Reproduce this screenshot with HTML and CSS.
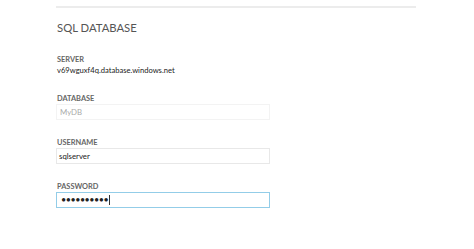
FILE: index.html
```html
<!DOCTYPE html>
<html lang="en">
<head>
    <meta charset="UTF-8">
    <title>SQL Database</title>
    <link rel="stylesheet" href="styles.css">
</head>
<body>
    <div class="panel">
        <h2 class="title">SQL DATABASE</h2>
        <div class="form">
            <div class="field">
                <div class="label">SERVER</div>
                <div class="value">v69wguxf4q.database.windows.net</div>
            </div>
            <div class="field">
                <div class="label">DATABASE</div>
                <div class="box disabled">MyDB</div>
            </div>
            <div class="field">
                <div class="label">USERNAME</div>
                <div class="box">sqlserver</div>
            </div>
            <div class="field">
                <div class="label">PASSWORD</div>
                <div class="box focused"><span class="dots">••••••••••</span><span class="caret"></span></div>
            </div>
        </div>
    </div>
</body>
</html>
```

FILE: styles.css
```css
body {
    margin: 0;
    background: #fff;
    font-family: Lato, "Noto Sans", sans-serif;
}
.panel {
    margin: 6px 0 0 56px;
    width: 360px;
    border-top: 2px solid #ececec;
}
.title {
    margin: 12px 0 0 1px;
    font-size: 11.3px;
    line-height: 15px;
    font-weight: 400;
    color: #555;
}
.form {
    display: flex;
    flex-direction: column;
    gap: 18px;
    margin-top: 20px;
}
.field {
    display: flex;
    flex-direction: column;
}
.label {
    margin-left: 1px;
    font-size: 7.4px;
    line-height: 10px;
    font-weight: 700;
    color: #666;
}
.value {
    margin-left: 1px;
    font-size: 7.6px;
    line-height: 11px;
    color: #222;
}
.box {
    width: 210px;
    height: 14px;
    padding: 0 0 0 2px;
    border: 1px solid #e8e8e8;
    font-size: 7.8px;
    line-height: 14px;
    color: #222;
    display: flex;
    align-items: center;
}
.box.disabled {
    border-color: #f3f3f3;
    color: #aaa;
    padding-left: 3px;
    width: 209px;
}
.box.focused {
    border-color: #93cde8;
    padding-left: 4px;
    width: 208px;
}
.dots {
    font-size: 9px;
    letter-spacing: -0.5px;
    color: #222;
}
.caret {
    width: 1px;
    height: 10px;
    margin-left: 1px;
    background: #333;
}
```
